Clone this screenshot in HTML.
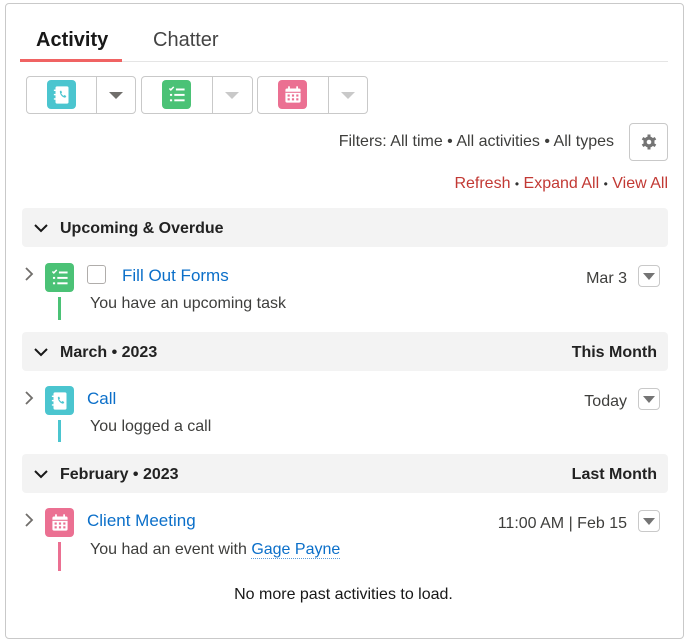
<!DOCTYPE html><html><head><style>
body{margin:0;width:687px;height:642px;background:#fff;font-family:"Liberation Sans",sans-serif;color:#181818;position:relative;overflow:hidden}
.a{position:absolute;white-space:nowrap}
.card{left:5px;top:3px;width:679px;height:636px;border:1px solid #c9c9c9;border-radius:4px;box-sizing:border-box}
.btn{border:1px solid #c9c9c9;border-radius:4px;height:38px;box-sizing:border-box;top:76px}
.ic{border-radius:4px;display:flex;align-items:center;justify-content:center}
.tri{width:0;height:0;border-left:7px solid transparent;border-right:7px solid transparent;border-top:7px solid #c9c9c9}
.sec{left:22px;width:646px;height:39px;background:#f3f3f3;border-radius:4px}
.sec b{position:absolute;left:38px;top:12px;font-size:16px;color:#222}
.sec i{position:absolute;right:11px;top:12px;font-size:16px;font-style:normal;font-weight:bold;color:#222}
.sec svg{position:absolute;left:12px;top:15px}
.lnk{color:#0b6fc9;font-size:17px}
.t{font-size:16px;color:#3e3e3c}
.dd{width:22px;height:22px;border:1px solid #c9c9c9;border-radius:4px;box-sizing:border-box;display:flex;align-items:center;justify-content:center}
.dd div{border-left:6px solid transparent;border-right:6px solid transparent;border-top:7px solid #747474}
</style></head><body>
<div class="a card"></div>
<div class="a" style="left:36px;top:29px;font-size:20px;font-weight:bold">Activity</div>
<div class="a" style="left:153px;top:29px;font-size:20px;color:#444">Chatter</div>
<div class="a" style="left:20px;top:61px;width:648px;height:1px;background:#e5e5e5"></div>
<div class="a" style="left:20px;top:59px;width:102px;height:3px;background:#f06363"></div>

<svg width="0" height="0" style="position:absolute"><defs>
<g id="call"><rect x="6" y="4" width="12" height="16" rx="1.5" fill="#fff"/><rect x="4.5" y="7" width="2.5" height="1.3" fill="#fff"/><rect x="4.5" y="11" width="2.5" height="1.3" fill="#fff"/><rect x="4.5" y="15" width="2.5" height="1.3" fill="#fff"/><path d="M10 8.5c0 3 2 5.5 5 6l1-1.5-1.7-1-0.8.8c-1-.5-1.8-1.4-2.2-2.4l.8-.8-1-1.7z" fill="#4bc5cf"/></g>
<g id="task"><path d="M5 6l1.3 1.3 2.7-2.8" stroke="#fff" stroke-width="1.4" fill="none"/><rect x="11" y="6" width="8" height="1.8" fill="#fff"/><rect x="5.5" y="11" width="2" height="1.8" fill="#fff"/><rect x="9.5" y="11" width="9.5" height="1.8" fill="#fff"/><rect x="5.5" y="16" width="2" height="1.8" fill="#fff"/><rect x="9.5" y="16" width="9.5" height="1.8" fill="#fff"/></g>
<g id="ev"><rect x="5" y="6" width="14" height="13" rx="1.5" fill="#fff"/><rect x="7.5" y="4" width="1.6" height="3" fill="#fff"/><rect x="15" y="4" width="1.6" height="3" fill="#fff"/><rect x="5" y="9" width="14" height="1" fill="#eb7092"/><g fill="#eb7092"><rect x="7" y="11.5" width="2" height="2"/><rect x="11" y="11.5" width="2" height="2"/><rect x="15" y="11.5" width="2" height="2"/><rect x="7" y="15" width="2" height="2"/><rect x="11" y="15" width="2" height="2"/><rect x="15" y="15" width="2" height="2"/></g></g>
</defs></svg>

<div class="a btn" style="left:26px;width:110px"></div><div class="a" style="left:96px;top:77px;width:1px;height:36px;background:#c9c9c9"></div>
<div class="a ic" style="left:47px;top:80px;width:29px;height:29px;background:#4bc5cf"><svg width="26" height="26" viewBox="0 0 24 24"><use href="#call"/></svg></div>
<div class="a tri" style="left:109px;top:92px;border-top-color:#706e6b"></div>
<div class="a btn" style="left:141px;width:112px"></div><div class="a" style="left:212px;top:77px;width:1px;height:36px;background:#c9c9c9"></div>
<div class="a ic" style="left:162px;top:80px;width:29px;height:29px;background:#4bc276"><svg width="26" height="26" viewBox="0 0 24 24"><use href="#task"/></svg></div>
<div class="a tri" style="left:225px;top:92px"></div>
<div class="a btn" style="left:257px;width:111px"></div><div class="a" style="left:328px;top:77px;width:1px;height:36px;background:#c9c9c9"></div>
<div class="a ic" style="left:278px;top:80px;width:29px;height:29px;background:#eb7092"><svg width="26" height="26" viewBox="0 0 24 24"><use href="#ev"/></svg></div>
<div class="a tri" style="left:341px;top:92px"></div>

<div class="a" style="right:73px;top:133px;font-size:16px;color:#3e3e3c">Filters: All time • All activities • All types</div>
<div class="a" style="left:629px;top:123px;width:39px;height:38px;border:1px solid #c9c9c9;border-radius:4px;box-sizing:border-box;display:flex;align-items:center;justify-content:center">
<svg width="18" height="18" viewBox="0 0 18 18"><g fill="#747474"><circle cx="9" cy="9" r="5.5"/><rect x="7.5" y="1.5" width="3" height="15"/><rect x="7.5" y="1.5" width="3" height="15" transform="rotate(60 9 9)"/><rect x="7.5" y="1.5" width="3" height="15" transform="rotate(120 9 9)"/></g><circle cx="9" cy="9" r="2.3" fill="#fff"/></svg></div>
<div class="a" style="right:19px;top:175px;font-size:16px;color:#c23934">Refresh <span style="color:#333;font-size:12px">•</span> Expand All <span style="color:#333;font-size:12px">•</span> View All</div>

<div class="a sec" style="top:208px"><svg width="14" height="10"><path d="M1 2l6 6 6-6" stroke="#181818" stroke-width="2" fill="none"/></svg><b>Upcoming &amp; Overdue</b></div>
<div class="a sec" style="top:332px"><svg width="14" height="10"><path d="M1 2l6 6 6-6" stroke="#181818" stroke-width="2" fill="none"/></svg><b>March • 2023</b><i>This Month</i></div>
<div class="a sec" style="top:454px"><svg width="14" height="10"><path d="M1 2l6 6 6-6" stroke="#181818" stroke-width="2" fill="none"/></svg><b>February • 2023</b><i>Last Month</i></div>

<!-- item 1 -->
<svg class="a" style="left:24px;top:267px" width="10" height="14"><path d="M2 1l6 6-6 6" stroke="#706e6b" stroke-width="1.8" fill="none"/></svg>
<div class="a ic" style="left:45px;top:263px;width:29px;height:29px;background:#4bc276"><svg width="26" height="26" viewBox="0 0 24 24"><use href="#task"/></svg></div>
<div class="a" style="left:58px;top:297px;width:3px;height:23px;background:#4bc276"></div>
<div class="a" style="left:87px;top:265px;width:19px;height:19px;border:1px solid #b0adab;border-radius:3px;box-sizing:border-box"></div>
<div class="a lnk" style="left:122px;top:266px">Fill Out Forms</div>
<div class="a t" style="left:90px;top:295px">You have an upcoming task</div>
<div class="a t" style="right:60px;top:270px">Mar 3</div>
<div class="a dd" style="left:638px;top:265px"><div></div></div>

<!-- item 2 -->
<svg class="a" style="left:24px;top:391px" width="10" height="14"><path d="M2 1l6 6-6 6" stroke="#706e6b" stroke-width="1.8" fill="none"/></svg>
<div class="a ic" style="left:45px;top:386px;width:29px;height:29px;background:#4bc5cf"><svg width="26" height="26" viewBox="0 0 24 24"><use href="#call"/></svg></div>
<div class="a" style="left:58px;top:420px;width:3px;height:22px;background:#4bc5cf"></div>
<div class="a lnk" style="left:87px;top:389px">Call</div>
<div class="a t" style="left:90px;top:418px">You logged a call</div>
<div class="a t" style="right:60px;top:393px">Today</div>
<div class="a dd" style="left:638px;top:388px"><div></div></div>

<!-- item 3 -->
<svg class="a" style="left:24px;top:513px" width="10" height="14"><path d="M2 1l6 6-6 6" stroke="#706e6b" stroke-width="1.8" fill="none"/></svg>
<div class="a ic" style="left:45px;top:508px;width:29px;height:29px;background:#eb7092"><svg width="26" height="26" viewBox="0 0 24 24"><use href="#ev"/></svg></div>
<div class="a" style="left:58px;top:542px;width:3px;height:29px;background:#eb7092"></div>
<div class="a lnk" style="left:87px;top:511px">Client Meeting</div>
<div class="a t" style="left:90px;top:541px">You had an event with <span style="color:#0b6fc9;border-bottom:1px dotted #5a9bd8">Gage Payne</span></div>
<div class="a t" style="right:60px;top:515px">11:00 AM | Feb 15</div>
<div class="a dd" style="left:638px;top:510px"><div></div></div>

<div class="a t" style="left:0;width:687px;text-align:center;top:586px;color:#181818">No more past activities to load.</div>
</body></html>
